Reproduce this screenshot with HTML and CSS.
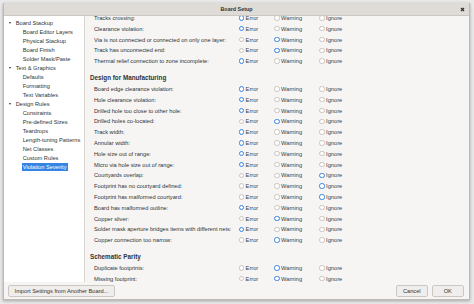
FILE: index.html
```html
<!DOCTYPE html>
<html>
<head>
<meta charset="utf-8">
<title>Board Setup</title>
<link rel="stylesheet" href="styles.css">
</head>
<body>
<div class="window">
  <div class="titlebar">
    <span class="title">Board Setup</span>
    <span class="close"><svg width="5" height="5" viewBox="0 0 5 5"><path d="M1 1 L4 4 M4 1 L1 4" stroke="#2e3436" stroke-width="1.3"/></svg></span>
  </div>
  <div class="main">
    <div class="tree">
      <div class="node top"><span class="arrow"></span>Board Stackup</div>
      <div class="node child">Board Editor Layers</div>
      <div class="node child">Physical Stackup</div>
      <div class="node child">Board Finish</div>
      <div class="node child">Solder Mask/Paste</div>
      <div class="node top"><span class="arrow"></span>Text &amp; Graphics</div>
      <div class="node child">Defaults</div>
      <div class="node child">Formatting</div>
      <div class="node child">Text Variables</div>
      <div class="node top"><span class="arrow"></span>Design Rules</div>
      <div class="node child">Constraints</div>
      <div class="node child">Pre-defined Sizes</div>
      <div class="node child">Teardrops</div>
      <div class="node child">Length-tuning Patterns</div>
      <div class="node child">Net Classes</div>
      <div class="node child">Custom Rules</div>
      <div class="node child"><span class="sel">Violation Severity</span></div>
    </div>
    <div class="content">
      <div class="scroller">
        <div class="section">
          <div class="row"><span class="label">Tracks crossing:</span><span class="opt"><span class="radio on"></span>Error</span><span class="opt"><span class="radio"></span>Warning</span><span class="opt"><span class="radio"></span>Ignore</span></div>
          <div class="row"><span class="label">Clearance violation:</span><span class="opt"><span class="radio on"></span>Error</span><span class="opt"><span class="radio"></span>Warning</span><span class="opt"><span class="radio"></span>Ignore</span></div>
          <div class="row"><span class="label">Via is not connected or connected on only one layer:</span><span class="opt"><span class="radio"></span>Error</span><span class="opt"><span class="radio on"></span>Warning</span><span class="opt"><span class="radio"></span>Ignore</span></div>
          <div class="row"><span class="label">Track has unconnected end:</span><span class="opt"><span class="radio"></span>Error</span><span class="opt"><span class="radio on"></span>Warning</span><span class="opt"><span class="radio"></span>Ignore</span></div>
          <div class="row"><span class="label">Thermal relief connection to zone incomplete:</span><span class="opt"><span class="radio on"></span>Error</span><span class="opt"><span class="radio"></span>Warning</span><span class="opt"><span class="radio"></span>Ignore</span></div>
        </div>
        <div class="section">
          <div class="heading">Design for Manufacturing</div>
          <div class="row"><span class="label">Board edge clearance violation:</span><span class="opt"><span class="radio on"></span>Error</span><span class="opt"><span class="radio"></span>Warning</span><span class="opt"><span class="radio"></span>Ignore</span></div>
          <div class="row"><span class="label">Hole clearance violation:</span><span class="opt"><span class="radio on"></span>Error</span><span class="opt"><span class="radio"></span>Warning</span><span class="opt"><span class="radio"></span>Ignore</span></div>
          <div class="row"><span class="label">Drilled hole too close to other hole:</span><span class="opt"><span class="radio on"></span>Error</span><span class="opt"><span class="radio"></span>Warning</span><span class="opt"><span class="radio"></span>Ignore</span></div>
          <div class="row"><span class="label">Drilled holes co-located:</span><span class="opt"><span class="radio"></span>Error</span><span class="opt"><span class="radio on"></span>Warning</span><span class="opt"><span class="radio"></span>Ignore</span></div>
          <div class="row"><span class="label">Track width:</span><span class="opt"><span class="radio on"></span>Error</span><span class="opt"><span class="radio"></span>Warning</span><span class="opt"><span class="radio"></span>Ignore</span></div>
          <div class="row"><span class="label">Annular width:</span><span class="opt"><span class="radio on"></span>Error</span><span class="opt"><span class="radio"></span>Warning</span><span class="opt"><span class="radio"></span>Ignore</span></div>
          <div class="row"><span class="label">Hole size out of range:</span><span class="opt"><span class="radio on"></span>Error</span><span class="opt"><span class="radio"></span>Warning</span><span class="opt"><span class="radio"></span>Ignore</span></div>
          <div class="row"><span class="label">Micro via hole size out of range:</span><span class="opt"><span class="radio on"></span>Error</span><span class="opt"><span class="radio"></span>Warning</span><span class="opt"><span class="radio"></span>Ignore</span></div>
          <div class="row"><span class="label">Courtyards overlap:</span><span class="opt"><span class="radio"></span>Error</span><span class="opt"><span class="radio"></span>Warning</span><span class="opt"><span class="radio on"></span>Ignore</span></div>
          <div class="row"><span class="label">Footprint has no courtyard defined:</span><span class="opt"><span class="radio"></span>Error</span><span class="opt"><span class="radio"></span>Warning</span><span class="opt"><span class="radio on"></span>Ignore</span></div>
          <div class="row"><span class="label">Footprint has malformed courtyard:</span><span class="opt"><span class="radio"></span>Error</span><span class="opt"><span class="radio"></span>Warning</span><span class="opt"><span class="radio on"></span>Ignore</span></div>
          <div class="row"><span class="label">Board has malformed outline:</span><span class="opt"><span class="radio on"></span>Error</span><span class="opt"><span class="radio"></span>Warning</span><span class="opt"><span class="radio"></span>Ignore</span></div>
          <div class="row"><span class="label">Copper sliver:</span><span class="opt"><span class="radio"></span>Error</span><span class="opt"><span class="radio on"></span>Warning</span><span class="opt"><span class="radio"></span>Ignore</span></div>
          <div class="row"><span class="label">Solder mask aperture bridges items with different nets:</span><span class="opt"><span class="radio on"></span>Error</span><span class="opt"><span class="radio"></span>Warning</span><span class="opt"><span class="radio"></span>Ignore</span></div>
          <div class="row"><span class="label">Copper connection too narrow:</span><span class="opt"><span class="radio"></span>Error</span><span class="opt"><span class="radio on"></span>Warning</span><span class="opt"><span class="radio"></span>Ignore</span></div>
        </div>
        <div class="section">
          <div class="heading">Schematic Parity</div>
          <div class="row"><span class="label">Duplicate footprints:</span><span class="opt"><span class="radio"></span>Error</span><span class="opt"><span class="radio on"></span>Warning</span><span class="opt"><span class="radio"></span>Ignore</span></div>
          <div class="row"><span class="label">Missing footprint:</span><span class="opt"><span class="radio"></span>Error</span><span class="opt"><span class="radio on"></span>Warning</span><span class="opt"><span class="radio"></span>Ignore</span></div>
        </div>
      </div>
    </div>
  </div>
  <div class="footer">
    <span class="btn import">Import Settings from Another Board...</span>
    <span class="spacer"></span>
    <span class="btn small">Cancel</span>
    <span class="btn small">OK</span>
  </div>
</div>
</body>
</html>
```
FILE: styles.css
```css
html, body {
  margin: 0;
  padding: 0;
}
body {
  background: #e9e9e9;
  width: 474px;
  height: 304px;
  overflow: hidden;
  font-family: "Liberation Sans", Arial, sans-serif;
  font-size: 5.7px;
  color: #2e3436;
}
.window {
  margin: 3px 0 0 3px;
  width: 467px;
  height: 297px;
  box-sizing: border-box;
  border: 1px solid #bfbab5;
  border-top: none;
  background: #f6f5f4;
  display: flex;
  flex-direction: column;
  box-shadow: 0 1px 3px rgba(0,0,0,0.3);
}
.titlebar {
  height: 13px;
  flex: none;
  background: #dfdcd8;
  border-bottom: 1px solid #cbc7c2;
  box-sizing: border-box;
  display: flex;
  align-items: center;
  justify-content: center;
  position: relative;
}
.title {
  font-weight: bold;
  font-size: 5.4px;
  color: #2e3436;
}
.close {
  position: absolute;
  right: 4px;
  top: 3.5px;
  width: 5px;
  height: 5px;
  display: flex;
}
.main {
  flex: none;
  height: 266px;
  display: flex;
}
.tree {
  width: 81px;
  flex: none;
  background: #ffffff;
  border-right: 1px solid #d9d5d1;
  padding-top: 2px;
  box-sizing: border-box;
}
.node {
  height: 9px;
  display: flex;
  align-items: center;
  white-space: nowrap;
}
.node.top {
  padding-left: 4.5px;
}
.node.child {
  padding-left: 18.7px;
}
.arrow {
  width: 0;
  height: 0;
  border-left: 1.6px solid transparent;
  border-right: 1.6px solid transparent;
  border-top: 2.4px solid #2e3436;
  margin-right: 5.2px;
}
.sel {
  background: #3584e4;
  color: #ffffff;
  padding: 0 1px;
  margin-left: -1px;
  line-height: 8px;
  height: 8px;
  display: inline-block;
}
.content {
  flex: 1;
  overflow: hidden;
  padding-left: 5px;
}
.scroller {
  margin-top: -3.4px;
}
.section + .section {
  margin-top: 5px;
}
.heading {
  height: 11px;
  line-height: 11px;
  font-weight: bold;
  font-size: 6.3px;
  margin-bottom: 1px;
}
.row {
  height: 10.8px;
  display: grid;
  grid-template-columns: 145px 35.5px 45px auto;
  align-items: center;
  padding-left: 4px;
  white-space: nowrap;
}
.opt {
  display: flex;
  align-items: center;
  color: #3d4142;
}
.radio {
  width: 5.4px;
  height: 5.4px;
  box-sizing: border-box;
  border-radius: 50%;
  border: 0.6px solid #c8c3be;
  background: #ffffff;
  margin-right: 1.4px;
  margin-left: -0.2px;
  flex: none;
}
.radio.on {
  border: 1.6px solid #3584e4;
}
.footer {
  flex: 1;
  display: flex;
  align-items: flex-start;
  padding: 3px 5px 0 4px;
  gap: 3.5px;
}
.spacer {
  flex: 1;
}
.btn {
  height: 12px;
  box-sizing: border-box;
  border: 1px solid #cdc7c2;
  border-radius: 2px;
  background: #f0eeec;
  display: flex;
  align-items: center;
  justify-content: center;
  white-space: nowrap;
}
.btn.import {
  width: 107px;
}
.btn.small {
  width: 32.5px;
}
```
